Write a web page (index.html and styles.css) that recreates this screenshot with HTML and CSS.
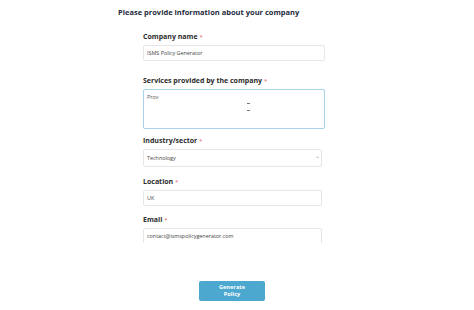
FILE: index.html
```html
<!doctype html>
<html lang="en">

<head>
    <meta charset="UTF-8">
    <meta name="viewport" content="width=device-width, initial-scale=1.0">
    <title>ISMS Policy Generator</title>
    <link rel="stylesheet" href="styles.css">
</head>

<body>
    <section class="company">
        <h1 class="company--title">Please provide information about your company</h1>
        <div class="company--form">
            <div class="field field--wide">
                <label class="field--label">Company name <span class="req">*</span></label>
                <input class="field--input" type="text" value="ISMS Policy Generator">
            </div>
            <div class="field field--wide field--services">
                <label class="field--label">Services provided by the company <span class="req">*</span></label>
                <div class="field--area">
                    <textarea class="field--textarea">Prov</textarea>
                    <span class="caret caret--top"></span>
                    <span class="caret caret--bottom"></span>
                </div>
            </div>
            <div class="field field--industry">
                <label class="field--label">Industry/sector <span class="req">*</span></label>
                <div class="field--select">
                    <select class="field--input field--dropdown">
                        <option>Technology</option>
                    </select>
                    <span class="chevron">&#8964;</span>
                </div>
            </div>
            <div class="field field--location">
                <label class="field--label">Location <span class="req">*</span></label>
                <input class="field--input" type="text" value="UK">
            </div>
            <div class="field">
                <label class="field--label">Email <span class="req">*</span></label>
                <input class="field--input" type="text" value="contact@ismspolicygenerator.com">
            </div>
        </div>
        <div class="company--actions">
            <button class="company--submit">Generate<br>Policy</button>
        </div>
    </section>
</body>

</html>
```

FILE: styles.css
```css
body {
    margin: 0;
    font-family: "Open Sans", "Noto Sans", sans-serif;
    background-color: #ffffff;
}

.company {
    width: 474px;
}

.company--title {
    font-size: 7.5px;
    font-weight: 700;
    line-height: 10px;
    color: #1e2a40;
    margin: 0;
    padding: 7px 0 0 118px;
}

.company--form {
    padding: 15px 0 0 143px;
    height: 211px;
    overflow: hidden;
}

.field {
    width: 179px;
    margin-bottom: 8px;
}

.field--wide {
    width: 182px;
    margin-bottom: 15px;
}

.field--services {
    margin-bottom: 7px;
}

.field--industry {
    margin-bottom: 10px;
}

.field--location {
    margin-bottom: 9px;
}

.field--label {
    display: block;
    font-size: 7px;
    font-weight: 700;
    line-height: 10px;
    color: #2b2b2b;
    margin-bottom: 3px;
}

.req {
    color: #e06060;
    font-weight: 400;
    font-size: 6px;
}

.field--input {
    display: block;
    box-sizing: border-box;
    width: 100%;
    height: 16px;
    padding: 0 3px;
    font-family: "Open Sans", sans-serif;
    font-size: 5.4px;
    color: #444444;
    background-color: #ffffff;
    border: 1px solid #e6e6e6;
    border-radius: 2px;
    outline: none;
}

.field--area {
    position: relative;
}

.field--textarea {
    display: block;
    box-sizing: border-box;
    width: 100%;
    height: 40px;
    padding: 3px 3px;
    resize: none;
    font-family: "Open Sans", sans-serif;
    font-size: 5.4px;
    color: #555555;
    border: 1px solid #a9d3ea;
    border-radius: 2px;
    box-shadow: 0 0 1px #cfe6f3;
    outline: none;
}

.caret {
    position: absolute;
    left: 104px;
    width: 3px;
    height: 1px;
    background-color: #777777;
}

.caret--top {
    top: 14px;
}

.caret--bottom {
    top: 21px;
}

.field--select {
    position: relative;
}

.field--dropdown {
    height: 18px;
    appearance: none;
    -webkit-appearance: none;
}

.chevron {
    position: absolute;
    right: 2px;
    top: 3px;
    font-size: 6px;
    color: #999999;
}

.company--actions {
    padding: 36px 0 0 199px;
}

.company--submit {
    width: 66px;
    height: 20px;
    padding: 0;
    font-family: "Open Sans", sans-serif;
    font-size: 5.6px;
    font-weight: 700;
    line-height: 7px;
    color: #ffffff;
    background-color: #4da8cf;
    border: none;
    border-radius: 2px;
    cursor: pointer;
}
```
